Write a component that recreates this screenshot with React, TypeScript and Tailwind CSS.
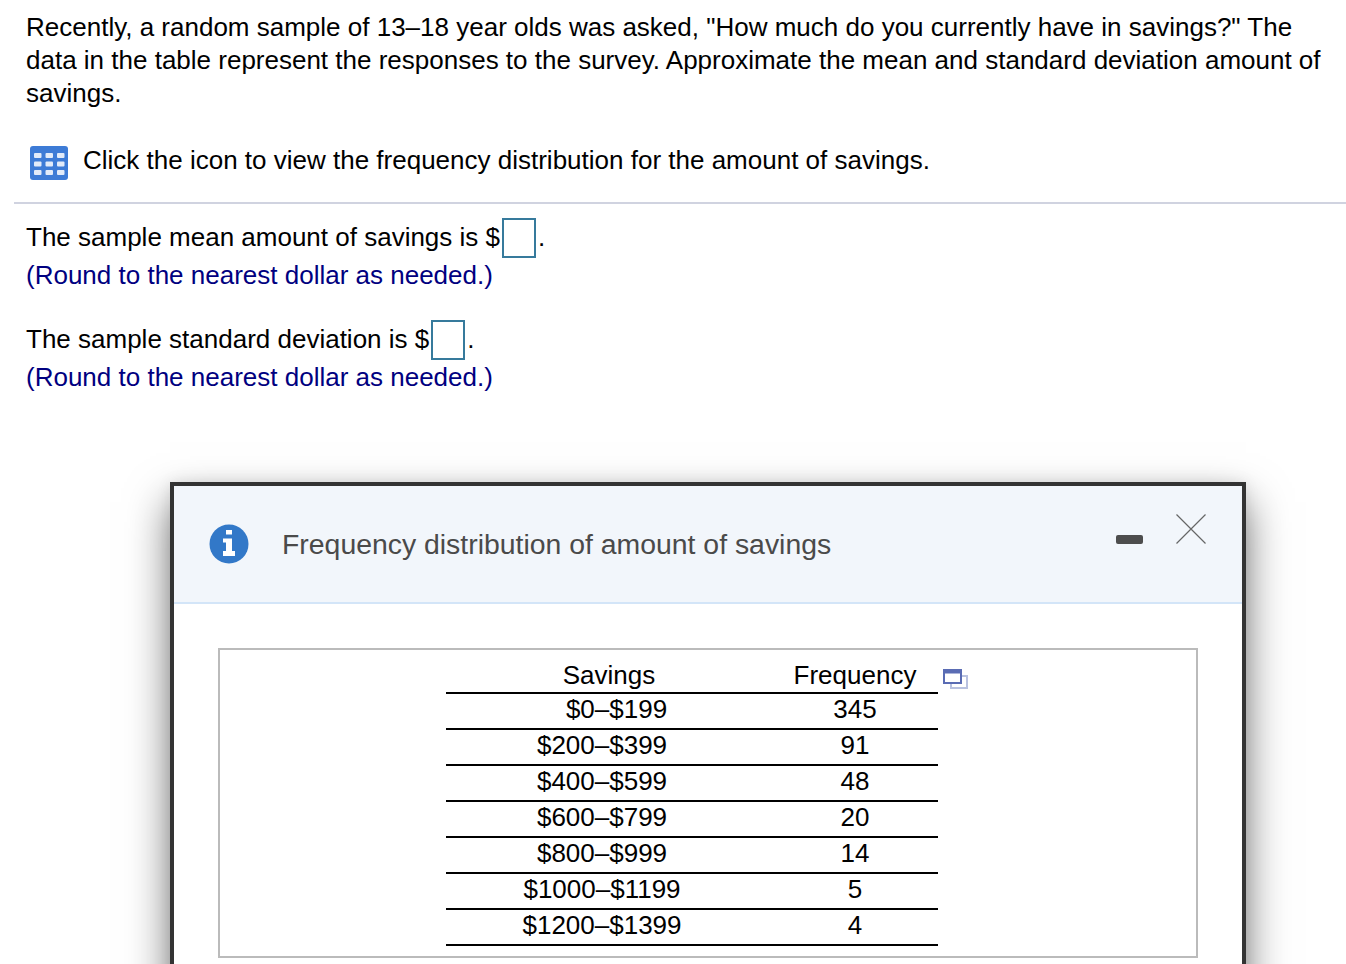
const rows = [
  { range: "$0–$199", freq: "345", cell: "pl-[15px]" },
  { range: "$200–$399", freq: "91", cell: "pr-[14px]" },
  { range: "$400–$599", freq: "48", cell: "pr-[14px]" },
  { range: "$600–$799", freq: "20", cell: "pr-[14px]" },
  { range: "$800–$999", freq: "14", cell: "pr-[14px]" },
  { range: "$1000–$1199", freq: "5", cell: "pr-[14px]" },
  { range: "$1200–$1399", freq: "4", cell: "pr-[14px]" },
];

function GridIcon() {
  return (
    <svg width="38" height="34" viewBox="0 0 38 34" className="shrink-0 mt-[5px]">
      <rect x="0" y="0" width="38" height="34" rx="3" fill="#3d7bd6" />
      {[7, 15.500, 24].map((y) =>
        [4, 15.500, 27].map((x) => <rect key={x + "-" + y} x={x} y={y} width="7.500" height="5" rx="1" fill="#ffffff" opacity="0.85" />)
      )}
    </svg>
  );
}

function InfoIcon() {
  return (
    <svg width="40" height="40" viewBox="0 0 40 40" className="shrink-0">
      <circle cx="20" cy="20" r="19.500" fill="#3278c8" />
      <rect x="17" y="6" width="6" height="4.500" fill="#ffffff" />
      <path d="M14 14.500h9V27h3v5H14v-5h3v-8.500h-3z" fill="#ffffff" />
    </svg>
  );
}

function ExpandIcon() {
  return (
    <svg width="25" height="20" viewBox="0 0 25 20" className="shrink-0">
      <rect x="8" y="7" width="16" height="12" fill="none" stroke="#b9c2e0" strokeWidth="2" />
      <rect x="1" y="1" width="17" height="13" fill="#ffffff" stroke="#5a6cb4" strokeWidth="2" />
      <rect x="1" y="1" width="17" height="3.500" fill="#5a6cb4" />
    </svg>
  );
}

function AnswerBox() {
  return <span className="inline-block w-[34px] h-[40px] border-2 border-[#367a9c] bg-white mx-[2px] shrink-0" />;
}

export default function App() {
  return (
    <div className="h-[964px] overflow-hidden bg-white text-black text-[26px] font-['Liberation_Sans',Arial,sans-serif]">
      <div className="pl-[26px] pr-[20px] pt-[11px] leading-[33px]">
        <p>
          Recently, a random sample of 13–18 year olds was asked, "How much do you currently have in savings?" The data in the table represent the responses to the survey. Approximate the mean and standard deviation amount of savings.
        </p>
        <div className="flex items-center gap-[15px] mt-[34px] pl-[4px] h-[33px]">
          <GridIcon />
          <span>Click the icon to view the frequency distribution for the amount of savings.</span>
        </div>
      </div>

      <div className="ml-[14px] mt-[25px] h-[2px] bg-[#d0d3e0]" />

      <div className="px-[26px] mt-[14px]">
        <div className="flex items-center h-[40px]">
          <span className="mb-[2px]">The sample mean amount of savings is $</span>
          <AnswerBox />
          <span className="mb-[2px]">.</span>
        </div>
        <div className="text-[#000080] -mt-[1px] h-[37px] leading-[36px]">(Round to the nearest dollar as needed.)</div>
        <div className="flex items-center h-[40px] mt-[26px]">
          <span className="mb-[2px]">The sample standard deviation is $</span>
          <AnswerBox />
          <span className="mb-[2px]">.</span>
        </div>
        <div className="text-[#000080] -mt-[1px] h-[37px] leading-[36px]">(Round to the nearest dollar as needed.)</div>
      </div>

      <div className="ml-[170px] mt-[86px] w-[1076px] h-[600px] border-[4px] border-[#333333] bg-white shadow-[0_20px_40px_rgba(0,0,0,0.55),0_0_14px_rgba(0,0,0,0.08)]">
        <div className="h-[116px] bg-[#f2f6fb] flex items-center pl-[35px] pr-[36px]">
          <InfoIcon />
          <span className="ml-[33px] text-[#4a4a4a] text-[28.4px]">Frequency distribution of amount of savings</span>
          <div className="ml-auto flex items-center gap-[33px]">
            <div className="w-[27px] h-[9px] rounded-[2px] bg-[#4d4d4d] -mt-[9px]" />
            <svg width="30" height="30" viewBox="0 0 30 30" className="mb-[30px]">
              <path d="M0.500 0.500L29.500 29.500M29.500 0.500L0.500 29.500" stroke="#666666" strokeWidth="1.200" fill="none" />
            </svg>
          </div>
        </div>
        <div className="h-[2px] bg-[#d3e5f8]" />
        <div className="mx-[44px] mt-[44px] h-[310px] border-2 border-[#bbbbbb] pl-[226px] pt-[8px]">
          <div className="flex items-start">
            <table className="w-[492px] border-collapse text-center text-[26px] leading-[34px]">
              <thead>
                <tr className="border-b-2 border-black h-[35px]">
                  <th className="font-normal w-[326px]">Savings</th>
                  <th className="font-normal">Frequency</th>
                </tr>
              </thead>
              <tbody>
                {rows.map((r) => (
                  <tr key={r.range} className="border-b-2 border-black h-[36px]">
                    <td className={r.cell + " leading-[30px] pb-[4px]"}>{r.range}</td>
                    <td className="leading-[30px] pb-[4px]">{r.freq}</td>
                  </tr>
                ))}
              </tbody>
            </table>
            <div className="ml-[5px] mt-[11px]">
              <ExpandIcon />
            </div>
          </div>
        </div>
      </div>
    </div>
  );
}
